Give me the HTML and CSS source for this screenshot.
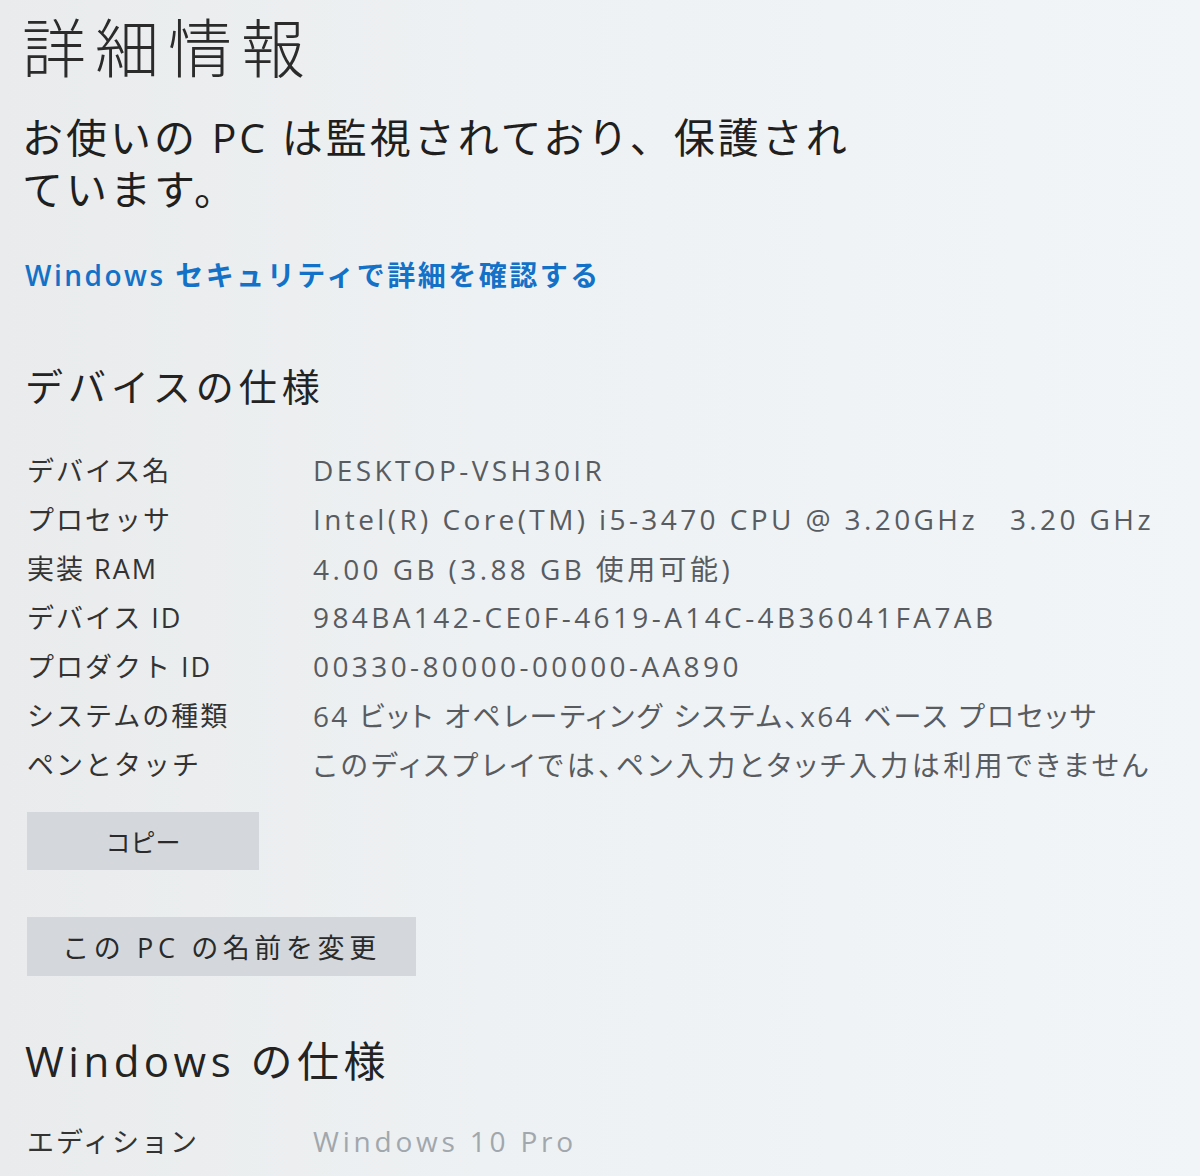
FILE: index.html
```html
<!DOCTYPE html>
<html lang="ja">
<head>
<meta charset="utf-8">
<title>詳細情報</title>
<link rel="stylesheet" href="styles.css">
</head>
<body>
<main class="page">
  <h1 class="title">詳細情報</h1>
  <p class="status">お使いの PC は監視されており、保護され<br>ています。</p>
  <a class="link" href="#">Windows セキュリティで詳細を確認する</a>

  <h2 class="section">デバイスの仕様</h2>
  <dl class="specs">
    <div class="row"><dt>デバイス名</dt><dd>DESKTOP-VSH30IR</dd></div>
    <div class="row"><dt>プロセッサ</dt><dd>Intel(R) Core(TM) i5-3470 CPU @ 3.20GHz&nbsp;&nbsp;&nbsp;3.20 GHz</dd></div>
    <div class="row"><dt>実装 RAM</dt><dd>4.00 GB (3.88 GB 使用可能)</dd></div>
    <div class="row"><dt>デバイス ID</dt><dd>984BA142-CE0F-4619-A14C-4B36041FA7AB</dd></div>
    <div class="row"><dt>プロダクト ID</dt><dd>00330-80000-00000-AA890</dd></div>
    <div class="row"><dt>システムの種類</dt><dd class="compact">64 ビット オペレーティング システム、x64 ベース プロセッサ</dd></div>
    <div class="row"><dt>ペンとタッチ</dt><dd>このディスプレイでは、ペン入力とタッチ入力は利用できません</dd></div>
  </dl>

  <div class="buttons">
    <button class="btn btn-copy" type="button">コピー</button>
    <button class="btn btn-rename" type="button">この PC の名前を変更</button>
  </div>

  <h2 class="section section-win">Windows の仕様</h2>
  <dl class="specs specs-win">
    <div class="row"><dt>エディション</dt><dd class="faint">Windows 10 Pro</dd></div>
    <div class="row"><dt>バージョン</dt><dd class="faint">21H2</dd></div>
  </dl>
</main>
</body>
</html>
```

FILE: styles.css
```css
html, body {
  margin: 0;
  padding: 0;
}
body {
  width: 1200px;
  height: 1176px;
  overflow: hidden;
  background: linear-gradient(90deg, #e9ebec 0%, #eef1f3 40%, #f2f5f8 100%);
  font-family: "Open Sans", "Noto Sans CJK JP", sans-serif;
  color: #2a2a2a;
}
.page {
  padding: 9px 0 0 22px;
}
.title {
  margin: 0;
  font-family: "Noto Sans CJK JP", sans-serif;
  font-weight: 300;
  font-size: 64px;
  line-height: 70px;
  letter-spacing: 9px;
  color: #2b2b2b;
}
.status {
  margin: 32px 0 0 0;
  font-weight: 400;
  font-size: 41px;
  line-height: 52px;
  letter-spacing: 3px;
  color: #1f1f1f;
}
.link {
  display: inline-block;
  margin: 42px 0 0 3px;
  font-size: 28px;
  line-height: 36px;
  font-weight: 600;
  letter-spacing: 2.5px;
  color: #1372c8;
  text-decoration: none;
}
.section {
  margin: 68px 0 0 3px;
  font-weight: 400;
  font-size: 38px;
  line-height: 50px;
  letter-spacing: 5px;
  color: #232323;
}
.specs {
  margin: 34px 0 0 5px;
  display: flex;
  flex-direction: column;
}
.row {
  display: flex;
  height: 49px;
  align-items: center;
}
.row dt {
  width: 286px;
  flex: none;
  font-size: 27px;
  color: #333;
  letter-spacing: 2px;
}
.row dd {
  margin: 0;
  font-size: 28px;
  color: #585c61;
  letter-spacing: 3.4px;
  white-space: nowrap;
  font-feature-settings: "palt";
}
.row dd.compact {
  letter-spacing: 2.2px;
}
.row dd.faint {
  color: #a0a7ad;
  letter-spacing: 3.8px;
}
.buttons {
  margin: 24px 0 0 5px;
  display: flex;
  flex-direction: column;
  align-items: flex-start;
  gap: 47px;
}
.btn {
  border: none;
  background: #d4d8dc;
  font-family: "Open Sans", "Noto Sans CJK JP", sans-serif;
  font-size: 27px;
  color: #2a2a2a;
  padding: 0;
  height: 58px;
}
.btn-copy {
  width: 232px;
  font-size: 25px;
}
.btn-rename {
  width: 389px;
  height: 59px;
  letter-spacing: 4.6px;
}
.section-win {
  margin-top: 60px;
  font-size: 42px;
  letter-spacing: 4.5px;
}
.specs-win {
  margin-top: 30px;
}
```
